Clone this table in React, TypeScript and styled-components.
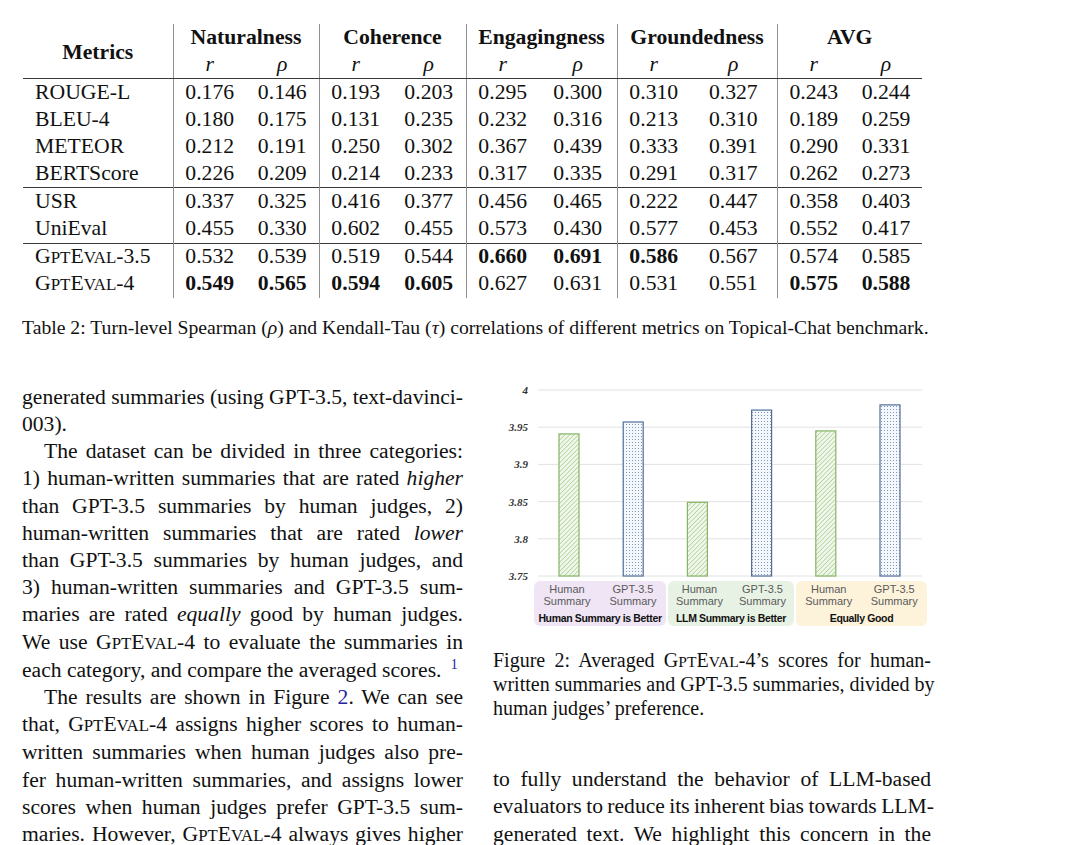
import React from "react";
import styled, { createGlobalStyle } from "styled-components";

const GlobalStyle = createGlobalStyle`
  html, body {
    margin: 0;
    padding: 0;
    background: #fff;
    overflow: hidden;
  }
  body {
    font-family: "Liberation Serif", "Times New Roman", serif;
    color: #111;
  }
`;

const Page = styled.main`
  width: 1070px;
  height: 845px;
  box-sizing: border-box;
  padding: 24px 0 0 22px;
  overflow: hidden;
`;

const Table = styled.table`
  border-collapse: collapse;
  table-layout: fixed;
  width: 899px;
  margin-left: 1px;
  font-size: 21.7px;
  line-height: 1;
`;

const Col = styled.col<{ $w: number }>`
  width: ${(p) => p.$w}px;
`;

const Head = styled.th<{ $sep?: boolean }>`
  height: 27px;
  padding: 0;
  font-weight: 700;
  text-align: center;
  white-space: nowrap;
  border-left: ${(p) => (p.$sep ? "1px solid #8f8f8f" : "none")};
`;

const SubHead = styled.th<{ $sep?: boolean }>`
  height: 27px;
  padding: 0;
  font-weight: 400;
  font-style: italic;
  text-align: center;
  border-left: ${(p) => (p.$sep ? "1px solid #8f8f8f" : "none")};
  border-bottom: 1px solid #3a3a3a;
`;

const MetricsHead = styled(Head)`
  padding-top: 4px;
  border-bottom: 1px solid #3a3a3a;
`;

const Row = styled.tr<{ $divider?: boolean }>`
  border-top: ${(p) => (p.$divider ? "1px solid #3a3a3a" : "none")};
`;

const Cell = styled.td<{ $sep?: boolean; $name?: boolean; $bold?: boolean }>`
  height: 27.1px;
  padding: 0 0 0 ${(p) => (p.$name ? "12px" : "0")};
  text-align: ${(p) => (p.$name ? "left" : "center")};
  font-weight: ${(p) => (p.$bold ? 700 : 400)};
  white-space: nowrap;
  border-left: ${(p) => (p.$sep ? "1px solid #8f8f8f" : "none")};
`;

const Small = styled.span`
  font-size: 0.78em;
`;

const TableCaption = styled.p`
  margin: 17px 0 0;
  font-size: 19.7px;
  line-height: 24px;
  white-space: nowrap;
`;

const Columns = styled.section`
  display: grid;
  grid-template-columns: 441px 438px;
  column-gap: 30px;
  margin-top: 45px;
`;

const Body = styled.div`
  font-size: 21.6px;
  line-height: 27.2px;
  word-spacing: -1px;
`;

const Line = styled.span<{ $last?: boolean; $indent?: boolean }>`
  display: block;
  white-space: nowrap;
  text-align: justify;
  text-align-last: ${(p) => (p.$last ? "left" : "justify")};
  word-spacing: ${(p) => (p.$last ? "0" : "inherit")};
  padding-left: ${(p) => (p.$indent ? "22px" : "0")};
`;

const Ref = styled.span`
  color: #2424a0;
`;

const Note = styled.sup`
  color: #2424a0;
  font-size: 14px;
  line-height: 0;
  margin-left: 4px;
`;

const Figure = styled.figure`
  margin: 0;
`;

const Plot = styled.svg`
  display: block;
  overflow: visible;
`;

const Legend = styled.div`
  display: flex;
  gap: 2px;
  margin: 1px 0 0 41px;
`;

const Group = styled.div<{ $bg: string; $w: number }>`
  width: ${(p) => p.$w}px;
  height: 45px;
  box-sizing: border-box;
  padding-top: 2px;
  border-radius: 6px;
  background: ${(p) => p.$bg};
  font-family: "Liberation Sans", Arial, sans-serif;
  display: grid;
  grid-template-columns: 1fr 1fr;
  grid-template-rows: 24px 1fr;
`;

const Tick = styled.div`
  color: #5a5a5a;
  font-size: 11px;
  line-height: 12px;
  text-align: center;
`;

const GroupName = styled.div`
  grid-column: 1 / 3;
  color: #111;
  font-size: 10.5px;
  font-weight: 700;
  letter-spacing: -0.35px;
  line-height: 12px;
  padding-top: 5px;
  text-align: center;
`;

const FigCaption = styled.figcaption`
  margin-top: 23px;
  font-size: 20px;
  line-height: 23.5px;
`;

const After = styled(Body)`
  margin-top: 46px;
`;

type Value = { v: string; b?: boolean };

// GPTEVAL in small caps, drawn by hand: the synthetic small-caps of the browser come out too small
const GptEval = ({ v }: { v: string }): JSX.Element => (
  <>
    G<Small>PT</Small>E<Small>VAL</Small>-{v}
  </>
);

const groups = [
  { name: "Naturalness", w: [73, 73] },
  { name: "Coherence", w: [73, 74] },
  { name: "Engagingness", w: [73, 78] },
  { name: "Groundedness", w: [73, 87] },
  { name: "AVG", w: [73, 72] },
];

const n = (s: string): Value => (s.endsWith("*") ? { v: s.slice(0, -1), b: true } : { v: s });

const rows: { name: React.ReactNode; divider?: boolean; vals: Value[] }[] = [
  { name: "ROUGE-L", vals: "0.176 0.146 0.193 0.203 0.295 0.300 0.310 0.327 0.243 0.244".split(" ").map(n) },
  { name: "BLEU-4", vals: "0.180 0.175 0.131 0.235 0.232 0.316 0.213 0.310 0.189 0.259".split(" ").map(n) },
  { name: "METEOR", vals: "0.212 0.191 0.250 0.302 0.367 0.439 0.333 0.391 0.290 0.331".split(" ").map(n) },
  { name: "BERTScore", vals: "0.226 0.209 0.214 0.233 0.317 0.335 0.291 0.317 0.262 0.273".split(" ").map(n) },
  { name: "USR", divider: true, vals: "0.337 0.325 0.416 0.377 0.456 0.465 0.222 0.447 0.358 0.403".split(" ").map(n) },
  { name: "UniEval", vals: "0.455 0.330 0.602 0.455 0.573 0.430 0.577 0.453 0.552 0.417".split(" ").map(n) },
  {
    name: <GptEval v="3.5" />,
    divider: true,
    vals: "0.532 0.539 0.519 0.544 0.660* 0.691* 0.586* 0.567 0.574 0.585".split(" ").map(n),
  },
  { name: <GptEval v="4" />, vals: "0.549* 0.565* 0.594* 0.605* 0.627 0.631 0.531 0.551 0.575* 0.588*".split(" ").map(n) },
];

// chart scale: 4.00 at y=6, 3.75 at y=192
const yOf = (v: number): number => 6 + ((4 - v) / 0.25) * 186;
const bars = [3.941, 3.957, 3.849, 3.973, 3.945, 3.98];
const ticks = [4, 3.95, 3.9, 3.85, 3.8, 3.75];

const legend = [
  { name: "Human Summary is Better", bg: "#efe5f5", w: 132 },
  { name: "LLM Summary is Better", bg: "#e8f2e4", w: 126 },
  { name: "Equally Good", bg: "#fdf2da", w: 131 },
];

const Chart = (): JSX.Element => (
  <Plot width={438} height={196} viewBox="0 0 438 196">
    <defs>
      <pattern id="hatch" width="3.2" height="3.2" patternUnits="userSpaceOnUse" patternTransform="rotate(45)">
        <rect width="3.2" height="3.2" fill="#f1f7ec" />
        <line x1="0" y1="0" x2="0" y2="3.2" stroke="#a3cb86" strokeWidth="1.3" />
      </pattern>
      <pattern id="dots" width="3" height="3" patternUnits="userSpaceOnUse">
        <rect width="3" height="3" fill="#f4f8fd" />
        <circle cx="1.5" cy="1.5" r="0.55" fill="#6d87aa" />
      </pattern>
    </defs>
    {ticks.map((t) => (
      <g key={t}>
        <line x1={45} x2={429} y1={yOf(t)} y2={yOf(t)} stroke="#e2e2e2" strokeWidth="1" />
        <text
          x={35}
          y={yOf(t)}
          textAnchor="end"
          dominantBaseline="central"
          fontFamily="Liberation Serif, serif"
          fontStyle="italic"
          fontWeight="700"
          fontSize="11"
          fill="#333"
        >
          {t}
        </text>
      </g>
    ))}
    {bars.map((v, i) => {
      const human = i % 2 === 0;
      const cx = 76 + i * 64.2;
      return (
        <rect
          key={i}
          x={cx - 10}
          y={yOf(v)}
          width={20}
          height={192 - yOf(v)}
          fill={human ? "url(#hatch)" : "url(#dots)"}
          stroke={human ? "#86b566" : "#50709a"}
          strokeWidth="1.2"
        />
      );
    })}
  </Plot>
);

const App = (): JSX.Element => {
  return (
    <Page>
      <GlobalStyle />
      <Table>
        <colgroup>
          <Col $w={150} />
          {groups.map((g) => g.w.map((w, j) => <Col key={g.name + j} $w={w} />))}
        </colgroup>
        <thead>
          <tr>
            <MetricsHead rowSpan={2}>Metrics</MetricsHead>
            {groups.map((g) => (
              <Head key={g.name} colSpan={2} $sep>
                {g.name}
              </Head>
            ))}
          </tr>
          <tr>
            {groups.map((g) => (
              <React.Fragment key={g.name}>
                <SubHead $sep>r</SubHead>
                <SubHead>ρ</SubHead>
              </React.Fragment>
            ))}
          </tr>
        </thead>
        <tbody>
          {rows.map((row, i) => (
            <Row key={i} $divider={row.divider}>
              <Cell $name>{row.name}</Cell>
              {row.vals.map((val, j) => (
                <Cell key={j} $sep={j % 2 === 0} $bold={val.b}>
                  {val.v}
                </Cell>
              ))}
            </Row>
          ))}
        </tbody>
      </Table>

      <TableCaption>
        Table 2: Turn-level Spearman (<i>ρ</i>) and Kendall-Tau (<i>τ</i>) correlations of different metrics on
        Topical-Chat benchmark.
      </TableCaption>

      <Columns>
        <Body>
          <Line>generated summaries (using GPT-3.5, text-davinci-</Line>
          <Line $last>003).</Line>
          <Line $indent>The dataset can be divided in three categories:</Line>
          <Line>
            1) human-written summaries that are rated <i>higher</i>
          </Line>
          <Line>than GPT-3.5 summaries by human judges, 2)</Line>
          <Line>
            human-written summaries that are rated <i>lower</i>
          </Line>
          <Line>than GPT-3.5 summaries by human judges, and</Line>
          <Line>3) human-written summaries and GPT-3.5 sum-</Line>
          <Line>
            maries are rated <i>equally</i> good by human judges.
          </Line>
          <Line>
            We use <GptEval v="4" /> to evaluate the summaries in
          </Line>
          <Line $last>
            each category, and compare the averaged scores. <Note>1</Note>
          </Line>
          <Line $indent>
            The results are shown in Figure <Ref>2</Ref>. We can see
          </Line>
          <Line>
            that, <GptEval v="4" /> assigns higher scores to human-
          </Line>
          <Line>written summaries when human judges also pre-</Line>
          <Line>fer human-written summaries, and assigns lower</Line>
          <Line>scores when human judges prefer GPT-3.5 sum-</Line>
          <Line>
            maries. However, <GptEval v="4" /> always gives higher
          </Line>
        </Body>

        <div>
          <Figure>
            <Chart />
            <Legend>
              {legend.map((g) => (
                <Group key={g.name} $bg={g.bg} $w={g.w}>
                  <Tick>
                    Human
                    <br />
                    Summary
                  </Tick>
                  <Tick>
                    GPT-3.5
                    <br />
                    Summary
                  </Tick>
                  <GroupName>{g.name}</GroupName>
                </Group>
              ))}
            </Legend>
            <FigCaption>
              <Line>
                Figure 2: Averaged <GptEval v="4" />’s scores for human-
              </Line>
              <Line>written summaries and GPT-3.5 summaries, divided by</Line>
              <Line $last>human judges’ preference.</Line>
            </FigCaption>
          </Figure>
          <After>
            <Line>to fully understand the behavior of LLM-based</Line>
            <Line>evaluators to reduce its inherent bias towards LLM-</Line>
            <Line>generated text. We highlight this concern in the</Line>
          </After>
        </div>
      </Columns>
    </Page>
  );
};

export default App;
